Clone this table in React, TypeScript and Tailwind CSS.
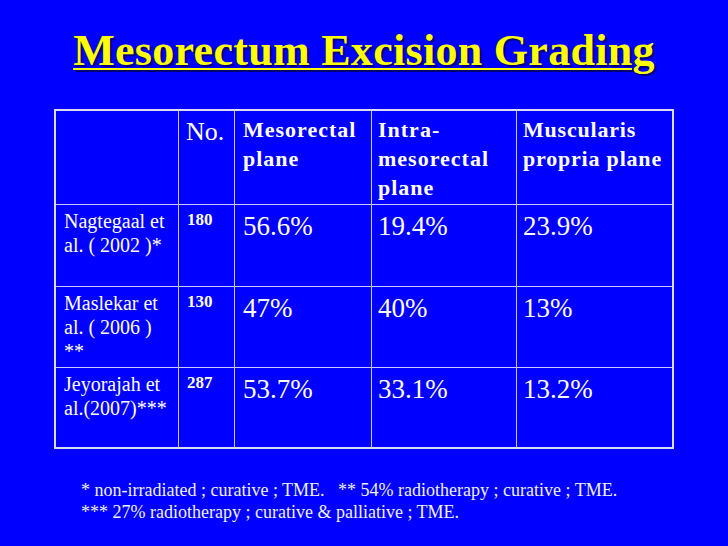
const rows = [
  { name: ["Nagtegaal et", "al. ( 2002 )*"], n: "180", a: "56.6%", b: "19.4%", c: "23.9%", h: "h-[82px]" },
  { name: ["Maslekar et", "al. ( 2006 )", "**"], n: "130", a: "47%", b: "40%", c: "13%", h: "h-[81px]" },
  { name: ["Jeyorajah et", "al.(2007)***"], n: "287", a: "53.7%", b: "33.1%", c: "13.2%", h: "h-[80px]" },
];

const serif = "font-['Liberation_Serif','Times_New_Roman',serif]";

export default function App() {
  return (
    <div className={`w-[728px] h-[546px] bg-[#0000ff] text-white overflow-hidden ${serif}`}>
      <h1 className="pt-[29px] text-center text-[44px] leading-[44px] font-bold tracking-[0.3px] text-[#ffff00] underline decoration-2 underline-offset-[3px] [text-shadow:2px_2px_1px_rgba(0,0,0,0.55)]">
        Mesorectum Excision Grading
      </h1>

      <div className="mt-[36px] ml-[54px] w-[620px] border-2 border-[#dcdcf0]">
        <div className="grid grid-cols-[122px_56px_137px_145px_156px] h-[93px]">
          <div />
          <div className="border-l border-[#c8c8ff] pl-[7px] pt-[6px] text-[26px] leading-[29px]">No.</div>
          <div className="border-l border-[#c8c8ff] pl-[8px] pt-[4px] text-[22px] leading-[29px] font-bold tracking-[1px]">
            Mesorectal plane
          </div>
          <div className="border-l border-[#c8c8ff] pl-[6px] pt-[4px] text-[22px] leading-[29px] font-bold tracking-[1px]">
            Intra-
            <br />
            mesorectal plane
          </div>
          <div className="border-l border-[#c8c8ff] pl-[6px] pt-[4px] text-[22px] leading-[29px] font-bold tracking-[0.8px]">
            Muscularis propria plane
          </div>
        </div>

        {rows.map((r) => (
          <div key={r.n} className={`grid grid-cols-[122px_56px_137px_145px_156px] border-t border-[#c8c8ff] ${r.h}`}>
            <div className="pl-[8px] pt-[4px] text-[20px] leading-[24px]">
              {r.name.map((l) => (
                <div key={l}>{l}</div>
              ))}
            </div>
            <div className="border-l border-[#c8c8ff] pl-[8px] pt-[5px] text-[17px] leading-[20px] font-bold">{r.n}</div>
            <div className="border-l border-[#c8c8ff] pl-[8px] pt-[6px] text-[27px] leading-[31px]">{r.a}</div>
            <div className="border-l border-[#c8c8ff] pl-[6px] pt-[6px] text-[27px] leading-[31px]">{r.b}</div>
            <div className="border-l border-[#c8c8ff] pl-[6px] pt-[6px] text-[27px] leading-[31px]">{r.c}</div>
          </div>
        ))}
      </div>

      <div className="mt-[30px] ml-[81px] text-[18px] leading-[22px] text-[#f0f0ff] whitespace-pre">
        <div>{"* non-irradiated ; curative ; TME.   ** 54% radiotherapy ; curative ; TME."}</div>
        <div>*** 27% radiotherapy ; curative &amp; palliative ; TME.</div>
      </div>
    </div>
  );
}
